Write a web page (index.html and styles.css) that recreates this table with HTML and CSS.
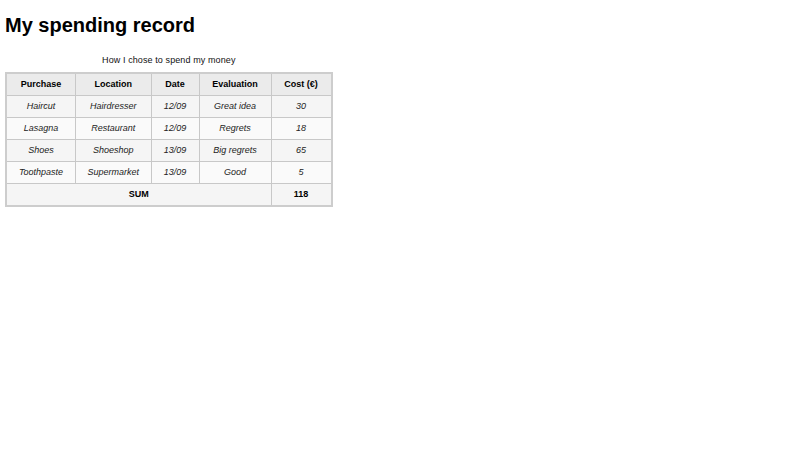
FILE: index.html
```
<!DOCTYPE html>
<html>
<head>
<meta charset="utf-8">
<link rel="stylesheet" href="styles.css">
</head>
<body>
<h1 class="title">My spending record</h1>
<table class="spending">
  <caption>How I chose to spend my money</caption>
  <thead>
    <tr>
      <th class="col-purchase">Purchase</th>
      <th class="col-location">Location</th>
      <th class="col-date">Date</th>
      <th class="col-eval">Evaluation</th>
      <th class="col-cost">Cost (€)</th>
    </tr>
  </thead>
  <tbody>
    <tr><td>Haircut</td><td>Hairdresser</td><td>12/09</td><td>Great idea</td><td>30</td></tr>
    <tr><td>Lasagna</td><td>Restaurant</td><td>12/09</td><td>Regrets</td><td>18</td></tr>
    <tr><td>Shoes</td><td>Shoeshop</td><td>13/09</td><td>Big regrets</td><td>65</td></tr>
    <tr><td>Toothpaste</td><td>Supermarket</td><td>13/09</td><td>Good</td><td>5</td></tr>
  </tbody>
  <tfoot>
    <tr><th colspan="4">SUM</th><td>118</td></tr>
  </tfoot>
</table>
</body>
</html>
```
FILE: styles.css
```
body {
  margin: 5px;
  font-family: "Liberation Sans", Arial, sans-serif;
  color: #000;
  background: #fff;
}
.title {
  font-size: 20px;
  margin: 9px 0 18px;
}
.spending {
  border-collapse: collapse;
  border: 2px solid rgb(205, 205, 205);
  letter-spacing: 0;
  font-size: 9px;
}
.spending caption {
  padding: 0 0 7px;
  font-size: 9px;
  letter-spacing: 0.1px;
  color: #111;
}
.spending td,
.spending th {
  border: 1px solid rgb(200, 200, 200);
  padding: 5px 11.5px;
  height: 11px;
  line-height: 11px;
  white-space: nowrap;
}
.spending th {
  background-color: rgb(235, 235, 235);
}
.col-purchase { width: 45px; }
.col-location { width: 51px; }
.col-date { width: 24px; }
.col-eval { width: 48px; }
.col-cost { width: 36px; }
.spending td {
  text-align: center;
  color: #222;
}
.spending tbody td {
  font-style: italic;
}
.spending tbody tr:nth-child(even) td {
  background-color: rgb(250, 250, 250);
}
.spending tbody tr:nth-child(odd) td {
  background-color: rgb(245, 245, 245);
}
.spending tfoot th,
.spending tfoot td {
  background-color: rgb(245, 245, 245);
  font-weight: bold;
  color: #000;
}
```
